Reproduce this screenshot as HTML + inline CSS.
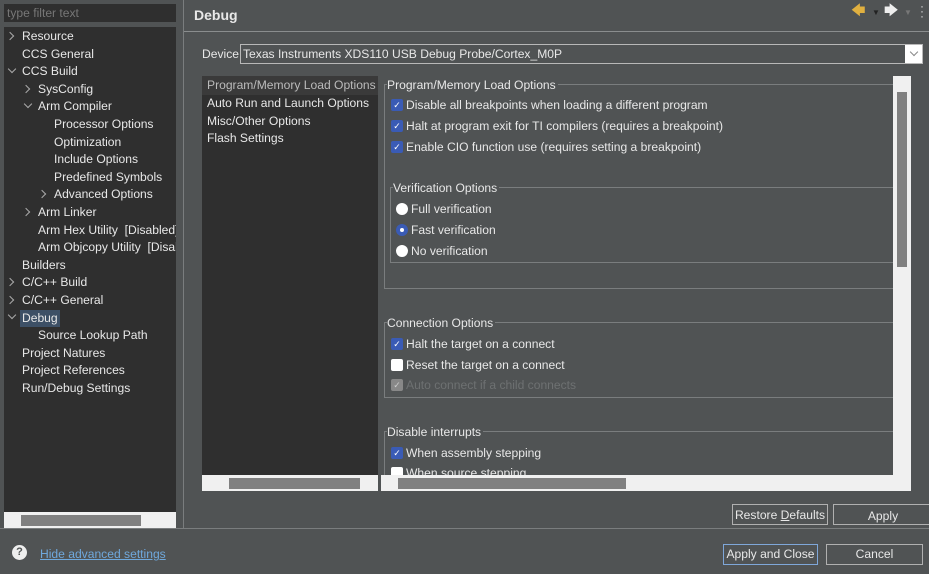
<!DOCTYPE html>
<html><head><style>
*{box-sizing:border-box;margin:0;padding:0}
body{width:929px;height:574px;background:#505354;font-family:"Liberation Sans",sans-serif;font-size:12.1px;color:#e8e8e8;position:relative;overflow:hidden}
.a{position:absolute;white-space:nowrap;line-height:17px}
.tr{position:absolute;left:4px;top:27px;width:172px;height:501px;background:#2f2f2f;overflow:hidden}
.tr div{position:absolute;white-space:nowrap;height:17px;line-height:17px;margin-top:1px}
.arr{position:absolute;width:6px;height:6px;border-right:1px solid #aaa;border-bottom:1px solid #aaa;transform:rotate(-45deg)}
.dn{transform:rotate(45deg)}
.cb{position:absolute;width:12px;height:12px;border-radius:2px;background:#3a5bb5;color:#fff;font-size:9px;line-height:12px;text-align:center}
.cb.off{background:#fff}
.cb.dis{background:#888;color:#ccc}
.rd{position:absolute;width:12px;height:12px;border-radius:50%;background:#fff}
.rd.on{background:#3a5bb5}
.rd.on:after{content:"";position:absolute;left:4px;top:4px;width:4px;height:4px;border-radius:50%;background:#fff}
.grp{position:absolute;border:1px solid #7a7d7e;border-right:none}
.lg{position:absolute;top:-9px;left:2px;background:#505354;padding-right:2px;line-height:16px}
.btn{position:absolute;border:1px solid #b0b0b0;text-align:center;line-height:19px}
</style></head><body>
<div class="a" style="left:4px;top:4px;width:172px;height:18px;background:#2f2f2f;color:#777;padding-left:3px;line-height:18px">type filter text</div>
<div class="tr">
<div style="left:18px;top:0">Resource</div><span class="arr" style="left:3px;top:6px"></span>
<div style="left:18px;top:17.6px">CCS General</div>
<div style="left:18px;top:35.2px">CCS Build</div><span class="arr dn" style="left:5px;top:39px"></span>
<div style="left:34px;top:52.8px">SysConfig</div><span class="arr" style="left:19px;top:59px"></span>
<div style="left:34px;top:70.4px">Arm Compiler</div><span class="arr dn" style="left:21px;top:74px"></span>
<div style="left:50px;top:88px">Processor Options</div>
<div style="left:50px;top:105.6px">Optimization</div>
<div style="left:50px;top:123.2px">Include Options</div>
<div style="left:50px;top:140.8px">Predefined Symbols</div>
<div style="left:50px;top:158.4px">Advanced Options</div><span class="arr" style="left:35px;top:164px"></span>
<div style="left:34px;top:176px">Arm Linker</div><span class="arr" style="left:19px;top:182px"></span>
<div style="left:34px;top:193.6px">Arm Hex Utility &nbsp;[Disabled]</div>
<div style="left:34px;top:211.2px">Arm Objcopy Utility &nbsp;[Disabled]</div>
<div style="left:18px;top:228.8px">Builders</div>
<div style="left:18px;top:246.4px">C/C++ Build</div><span class="arr" style="left:3px;top:252px"></span>
<div style="left:18px;top:264px">C/C++ General</div><span class="arr" style="left:3px;top:270px"></span>
<div style="left:16px;top:281.6px;background:#3d5066;padding:0 2px">Debug</div><span class="arr dn" style="left:5px;top:285px"></span>
<div style="left:34px;top:299.2px">Source Lookup Path</div>
<div style="left:18px;top:316.8px">Project Natures</div>
<div style="left:18px;top:334.4px">Project References</div>
<div style="left:18px;top:352px">Run/Debug Settings</div>
<span style="position:absolute;left:0;top:485px;width:172px;height:16px;background:#f0f0f0"></span>
<span style="position:absolute;left:17px;top:488px;width:120px;height:11px;background:#808080"></span>
</div>
<div class="a" style="left:183px;top:0;width:1px;height:528px;background:#7a7d7e"></div>
<div class="a" style="left:0;top:528px;width:929px;height:1px;background:#7a7d7e"></div>
<div class="a" style="left:194px;top:7px;font-weight:bold;font-size:14px">Debug</div>
<div class="a" style="left:851px;top:2px;color:#e0b040;font-size:14px">🡄</div>
<div class="a" style="left:872px;top:4px;color:#222;font-size:8px">▼</div>
<div class="a" style="left:884px;top:2px;color:#eee;font-size:14px">🡆</div>
<div class="a" style="left:904px;top:4px;color:#777;font-size:8px">▼</div>
<div class="a" style="left:920px;top:4px;color:#ddd;font-size:12px;line-height:5px">·<br>·<br>·</div>
<div class="a" style="left:184px;top:31px;width:745px;height:1px;background:#8a8d8e"></div>
<div class="a" style="left:202px;top:46px">Device</div>
<div class="a" style="left:240px;top:44px;width:683px;height:20px;border:1px solid #b8b8b8;padding-left:2px;line-height:18px">Texas Instruments XDS110 USB Debug Probe/Cortex_M0P</div>
<div class="a" style="left:905px;top:45px;width:17px;height:18px;background:#fff"><span class="arr dn" style="left:6px;top:4px;border-color:#888"></span></div>
<div class="a" style="left:202px;top:76px;width:176px;height:415px;background:#2f2f2f">
<div class="a" style="left:0;top:0;width:176px;height:19px;background:#3a3a3a;color:#bbb;padding-left:5px;line-height:19px;overflow:hidden">Program/Memory Load Options</div>
<div class="a" style="left:5px;top:19px">Auto Run and Launch Options</div>
<div class="a" style="left:5px;top:37px">Misc/Other Options</div>
<div class="a" style="left:5px;top:54px">Flash Settings</div>
<div class="a" style="left:0;top:399px;width:176px;height:16px;background:#f0f0f0"></div>
<div class="a" style="left:27px;top:402px;width:131px;height:11px;background:#808080"></div>
</div>
<div class="a" style="left:381px;top:76px;width:530px;height:415px;overflow:hidden">
<div class="grp" style="left:3px;top:8px;width:510px;height:205px"><span class="lg" style="top:-8px">Program/Memory Load Options</span></div>
<span class="cb" style="left:10px;top:23px">✓</span><div class="a" style="left:25px;top:21px">Disable all breakpoints when loading a different program</div>
<span class="cb" style="left:10px;top:44px">✓</span><div class="a" style="left:25px;top:42px">Halt at program exit for TI compilers (requires a breakpoint)</div>
<span class="cb" style="left:10px;top:65px">✓</span><div class="a" style="left:25px;top:63px">Enable CIO function use (requires setting a breakpoint)</div>
<div class="grp" style="left:9px;top:111px;width:504px;height:76px"><span class="lg" style="top:-8px">Verification Options</span></div>
<span class="rd" style="left:15px;top:127px"></span><div class="a" style="left:30px;top:125px">Full verification</div>
<span class="rd on" style="left:15px;top:148px"></span><div class="a" style="left:30px;top:146px">Fast verification</div>
<span class="rd" style="left:15px;top:169px"></span><div class="a" style="left:30px;top:167px">No verification</div>
<div class="grp" style="left:3px;top:246px;width:510px;height:76px"><span class="lg" style="top:-8px">Connection Options</span></div>
<span class="cb" style="left:10px;top:262px">✓</span><div class="a" style="left:25px;top:260px">Halt the target on a connect</div>
<span class="cb off" style="left:10px;top:283px"></span><div class="a" style="left:25px;top:281px">Reset the target on a connect</div>
<span class="cb dis" style="left:10px;top:303px">✓</span><div class="a" style="left:25px;top:301px;color:#6e7172">Auto connect if a child connects</div>
<div class="grp" style="left:3px;top:355px;width:510px;height:80px"><span class="lg" style="top:-8px">Disable interrupts</span></div>
<span class="cb" style="left:10px;top:371px">✓</span><div class="a" style="left:25px;top:369px">When assembly stepping</div>
<span class="cb off" style="left:10px;top:391px"></span><div class="a" style="left:25px;top:389px">When source stepping</div>
<div class="a" style="left:0;top:399px;width:530px;height:16px;background:#f0f0f0"></div>
<div class="a" style="left:17px;top:402px;width:228px;height:11px;background:#808080"></div>
<div class="a" style="left:512px;top:0;width:18px;height:399px;background:#f0f0f0"></div>
<div class="a" style="left:516px;top:16px;width:10px;height:175px;background:#808080"></div>
</div>
<div class="btn" style="left:732px;top:504px;width:96px;height:21px;line-height:20px">Restore <u>D</u>efaults</div>
<div class="btn" style="left:833px;top:504px;width:100px;height:21px;line-height:22px">Apply</div>
<div class="a" style="left:12px;top:545px;width:15px;height:15px;border-radius:50%;background:#eee;color:#505354;font-weight:bold;font-size:11px;text-align:center;line-height:15px">?</div>
<div class="a" style="left:40px;top:546px;color:#6fa8dc;text-decoration:underline">Hide advanced settings</div>
<div class="btn" style="left:723px;top:544px;width:95px;height:21px;border-color:#7fa7d9">Apply and Close</div>
<div class="btn" style="left:826px;top:544px;width:97px;height:21px">Cancel</div>
</body></html>
